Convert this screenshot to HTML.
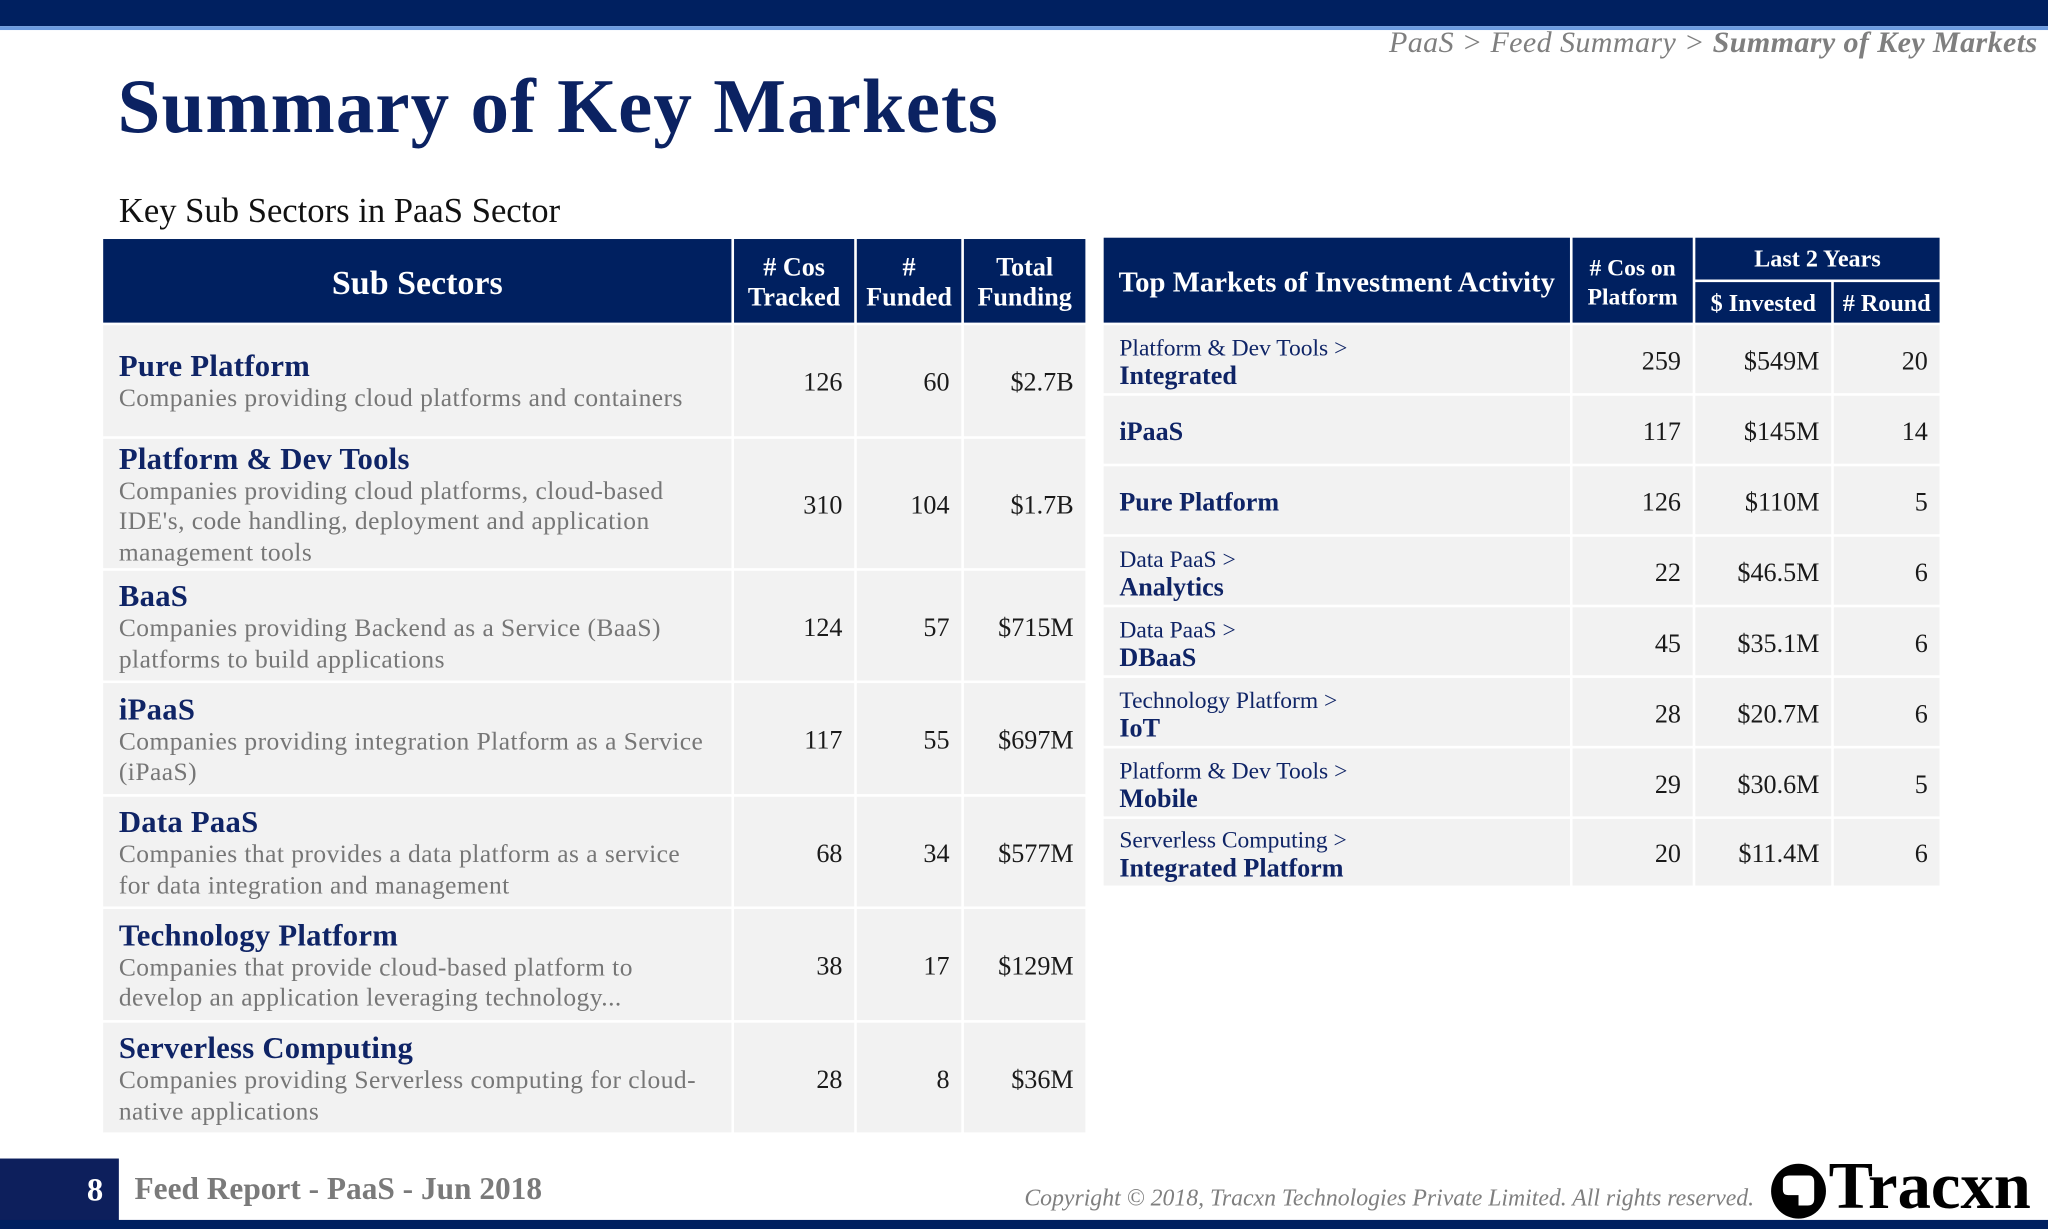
<!DOCTYPE html>
<html><head><meta charset="utf-8">
<style>
*{margin:0;padding:0;box-sizing:border-box}
html,body{width:2048px;height:1229px;overflow:hidden;background:#fff}
#w{position:absolute;left:0;top:0;width:1568px;height:941px;transform:scale(1.30612);transform-origin:0 0;font-family:"Liberation Serif",serif}
.a{position:absolute}
.h{background:#002060;color:#fff;font-weight:bold;display:flex;align-items:center;justify-content:center;text-align:center;padding-top:3px}
.c{background:#f2f2f2;display:flex;align-items:center;padding-top:4px}
.n{justify-content:flex-end;padding-right:9px;font-size:20px;color:#1a1a1a}
.l{flex-direction:column;align-items:flex-start;justify-content:center;padding-left:12px}
.nm{font-weight:bold;color:#0f2466;font-size:23.5px;line-height:25px;letter-spacing:0.2px}
.ds{color:#767676;font-size:19.5px;line-height:23.5px;letter-spacing:0.35px;white-space:nowrap}
.r1{color:#0f2466;font-size:18px;line-height:22px}
.r2{color:#0f2466;font-size:20px;font-weight:bold;line-height:23px}
</style></head><body><div id="w">
<div class="a" style="left:0;top:0;width:1568px;height:20px;background:#002060"></div>
<div class="a" style="left:0;top:20px;width:1568px;height:3px;background:#6c9be0"></div>
<div class="a" style="right:8px;top:20px;font-size:23px;letter-spacing:0.3px;font-style:italic;color:#7f7f7f;white-space:nowrap">PaaS &gt; Feed Summary &gt; <b>Summary of Key Markets</b></div>
<div class="a" style="left:90px;top:47px;font-size:59px;font-weight:bold;color:#0b2262;white-space:nowrap;letter-spacing:0.8px">Summary of Key Markets</div>
<div class="a" style="left:91px;top:146px;font-size:26.5px;color:#111;white-space:nowrap">Key Sub Sectors in PaaS Sector</div>

<div class="a h" style="left:79px;top:183px;width:481px;height:64px;font-size:26px">Sub Sectors</div>
<div class="a h" style="left:562px;top:183px;width:92px;height:64px;font-size:20px;line-height:23px">#&nbsp;Cos<br>Tracked</div>
<div class="a h" style="left:656px;top:183px;width:80px;height:64px;font-size:20px;line-height:23px">#<br>Funded</div>
<div class="a h" style="left:738px;top:183px;width:93px;height:64px;font-size:20px;line-height:23px">Total<br>Funding</div>

<div class="a c l" style="left:79px;top:249px;width:481px;height:85px"><div class="nm">Pure Platform</div><div class="ds">Companies providing cloud platforms and containers</div></div>
<div class="a c n" style="left:562px;top:249px;width:92px;height:85px">126</div><div class="a c n" style="left:656px;top:249px;width:80px;height:85px">60</div><div class="a c n" style="left:738px;top:249px;width:93px;height:85px">$2.7B</div>

<div class="a c l" style="left:79px;top:336px;width:481px;height:99px"><div class="nm">Platform &amp; Dev Tools</div><div class="ds">Companies providing cloud platforms, cloud-based<br>IDE's, code handling, deployment and application<br>management tools</div></div>
<div class="a c n" style="left:562px;top:336px;width:92px;height:99px">310</div><div class="a c n" style="left:656px;top:336px;width:80px;height:99px">104</div><div class="a c n" style="left:738px;top:336px;width:93px;height:99px">$1.7B</div>

<div class="a c l" style="left:79px;top:437px;width:481px;height:84px"><div class="nm">BaaS</div><div class="ds">Companies providing Backend as a Service (BaaS)<br>platforms to build applications</div></div>
<div class="a c n" style="left:562px;top:437px;width:92px;height:84px">124</div><div class="a c n" style="left:656px;top:437px;width:80px;height:84px">57</div><div class="a c n" style="left:738px;top:437px;width:93px;height:84px">$715M</div>

<div class="a c l" style="left:79px;top:523px;width:481px;height:85px"><div class="nm">iPaaS</div><div class="ds">Companies providing integration Platform as a Service<br>(iPaaS)</div></div>
<div class="a c n" style="left:562px;top:523px;width:92px;height:85px">117</div><div class="a c n" style="left:656px;top:523px;width:80px;height:85px">55</div><div class="a c n" style="left:738px;top:523px;width:93px;height:85px">$697M</div>

<div class="a c l" style="left:79px;top:610px;width:481px;height:84px"><div class="nm">Data PaaS</div><div class="ds">Companies that provides a data platform as a service<br>for data integration and management</div></div>
<div class="a c n" style="left:562px;top:610px;width:92px;height:84px">68</div><div class="a c n" style="left:656px;top:610px;width:80px;height:84px">34</div><div class="a c n" style="left:738px;top:610px;width:93px;height:84px">$577M</div>

<div class="a c l" style="left:79px;top:696px;width:481px;height:85px"><div class="nm">Technology Platform</div><div class="ds">Companies that provide cloud-based platform to<br>develop an application leveraging technology...</div></div>
<div class="a c n" style="left:562px;top:696px;width:92px;height:85px">38</div><div class="a c n" style="left:656px;top:696px;width:80px;height:85px">17</div><div class="a c n" style="left:738px;top:696px;width:93px;height:85px">$129M</div>

<div class="a c l" style="left:79px;top:783px;width:481px;height:84px"><div class="nm">Serverless Computing</div><div class="ds">Companies providing Serverless computing for cloud-<br>native applications</div></div>
<div class="a c n" style="left:562px;top:783px;width:92px;height:84px">28</div><div class="a c n" style="left:656px;top:783px;width:80px;height:84px">8</div><div class="a c n" style="left:738px;top:783px;width:93px;height:84px">$36M</div>

<div class="a h" style="left:845px;top:182px;width:357px;height:65px;font-size:22px">Top Markets of Investment Activity</div>
<div class="a h" style="left:1204px;top:182px;width:92px;height:65px;font-size:18px;line-height:22px">#&nbsp;Cos on<br>Platform</div>
<div class="a h" style="left:1298px;top:182px;width:187px;height:32px;font-size:18.5px">Last 2 Years</div>
<div class="a h" style="left:1298px;top:216px;width:104px;height:31px;font-size:18.5px">$ Invested</div>
<div class="a h" style="left:1404px;top:216px;width:81px;height:31px;font-size:18.5px"># Round</div>

<div class="a c l" style="left:845px;top:249px;width:357px;height:52px"><div class="r1">Platform &amp; Dev Tools &gt;</div><div class="r2">Integrated</div></div>
<div class="a c n" style="left:1204px;top:249px;width:92px;height:52px">259</div><div class="a c n" style="left:1298px;top:249px;width:104px;height:52px">$549M</div><div class="a c n" style="left:1404px;top:249px;width:81px;height:52px">20</div>

<div class="a c l" style="left:845px;top:303px;width:357px;height:52px"><div class="r2">iPaaS</div></div>
<div class="a c n" style="left:1204px;top:303px;width:92px;height:52px">117</div><div class="a c n" style="left:1298px;top:303px;width:104px;height:52px">$145M</div><div class="a c n" style="left:1404px;top:303px;width:81px;height:52px">14</div>

<div class="a c l" style="left:845px;top:357px;width:357px;height:52px"><div class="r2">Pure Platform</div></div>
<div class="a c n" style="left:1204px;top:357px;width:92px;height:52px">126</div><div class="a c n" style="left:1298px;top:357px;width:104px;height:52px">$110M</div><div class="a c n" style="left:1404px;top:357px;width:81px;height:52px">5</div>

<div class="a c l" style="left:845px;top:411px;width:357px;height:52px"><div class="r1">Data PaaS &gt;</div><div class="r2">Analytics</div></div>
<div class="a c n" style="left:1204px;top:411px;width:92px;height:52px">22</div><div class="a c n" style="left:1298px;top:411px;width:104px;height:52px">$46.5M</div><div class="a c n" style="left:1404px;top:411px;width:81px;height:52px">6</div>

<div class="a c l" style="left:845px;top:465px;width:357px;height:52px"><div class="r1">Data PaaS &gt;</div><div class="r2">DBaaS</div></div>
<div class="a c n" style="left:1204px;top:465px;width:92px;height:52px">45</div><div class="a c n" style="left:1298px;top:465px;width:104px;height:52px">$35.1M</div><div class="a c n" style="left:1404px;top:465px;width:81px;height:52px">6</div>

<div class="a c l" style="left:845px;top:519px;width:357px;height:52px"><div class="r1">Technology Platform &gt;</div><div class="r2">IoT</div></div>
<div class="a c n" style="left:1204px;top:519px;width:92px;height:52px">28</div><div class="a c n" style="left:1298px;top:519px;width:104px;height:52px">$20.7M</div><div class="a c n" style="left:1404px;top:519px;width:81px;height:52px">6</div>

<div class="a c l" style="left:845px;top:573px;width:357px;height:52px"><div class="r1">Platform &amp; Dev Tools &gt;</div><div class="r2">Mobile</div></div>
<div class="a c n" style="left:1204px;top:573px;width:92px;height:52px">29</div><div class="a c n" style="left:1298px;top:573px;width:104px;height:52px">$30.6M</div><div class="a c n" style="left:1404px;top:573px;width:81px;height:52px">5</div>

<div class="a c l" style="left:845px;top:627px;width:357px;height:51px"><div class="r1">Serverless Computing &gt;</div><div class="r2">Integrated Platform</div></div>
<div class="a c n" style="left:1204px;top:627px;width:92px;height:51px">20</div><div class="a c n" style="left:1298px;top:627px;width:104px;height:51px">$11.4M</div><div class="a c n" style="left:1404px;top:627px;width:81px;height:51px">6</div>

<div class="a" style="left:0;top:887px;width:91px;height:48px;background:#0d1f5c;color:#fff;font-weight:bold;font-size:25px;text-align:right;padding-right:12px;line-height:50px">8</div>
<div class="a" style="left:0;top:934px;width:1568px;height:7px;background:#002060"></div>
<div class="a" style="left:103px;top:898px;font-size:24px;font-weight:bold;color:#7a7a7a;white-space:nowrap">Feed Report - PaaS - Jun 2018</div>
<div class="a" style="right:225px;top:907px;font-size:18.2px;font-style:italic;color:#7f7f7f;white-space:nowrap">Copyright © 2018, Tracxn Technologies Private Limited. All rights reserved.</div>
<svg class="a" style="left:1355px;top:890px" width="44" height="44" viewBox="0 0 44 44"><circle cx="22" cy="22" r="21" fill="#000"/><path d="M10 14 Q10 10 15 10 L30 10 Q34 10 34 15 L34 28 Q34 33 29 33 L22 33 L22 25 L14 25 Q10 25 10 21 Z" fill="#fff"/></svg>
<div class="a" style="left:1400px;top:880px;font-size:51px;font-weight:bold;color:#000;white-space:nowrap;letter-spacing:0px">Tracxn</div>
</div></body></html>
